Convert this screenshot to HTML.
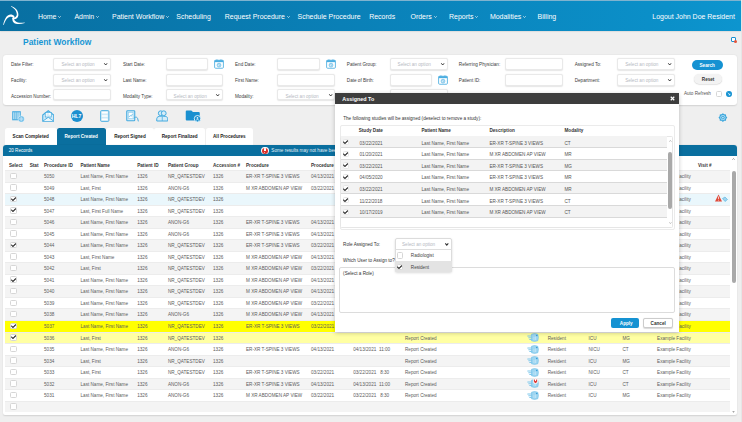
<!DOCTYPE html><html><head><meta charset="utf-8"><style>
*{box-sizing:border-box}
html,body{margin:0;padding:0;width:742px;height:422px;overflow:hidden;background:#efefef;font-family:"Liberation Sans",sans-serif}
.t{position:absolute;white-space:nowrap;line-height:1}
#root{position:absolute;left:0;top:0;width:742px;height:422px;overflow:hidden}
.abs{position:absolute}
.inp{position:absolute;background:#fff;border:0.6px solid #e9e9e9;border-radius:2px;box-shadow:0 0.3px 1.2px rgba(0,0,0,0.10)}
.chev{position:absolute;width:2.6px;height:2.6px;border-right:0.9px solid #333;border-bottom:0.9px solid #333;transform:rotate(45deg)}
.cb{position:absolute;width:6.4px;height:6.4px;border:0.6px solid #d6d6d6;border-radius:1.5px;background:#fff}
</style></head><body><div id="root">
<div class="abs" style="left:0;top:0;width:741px;height:31.3px;box-shadow:0 0.8px 1.5px rgba(0,0,0,0.18);background:linear-gradient(90deg,#086fa1 0%,#0a80b7 46%,#0b90c9 90%,#0d95cf 100%)"></div>
<div class="abs" style="left:0;top:0;width:741px;height:1px;background:#7fb3cf"></div>
<svg class="abs" style="left:0;top:0" width="30" height="31" viewBox="0 0 30 31">
<g fill="#fff">
<path d="M11.2 6.0 C15.5 7.5 18.8 11 18.4 15.2 C18.1 17.6 16.2 19.2 14.0 19.3 L13.6 18.0 C15.3 17.6 16.6 16.3 16.8 14.8 C17.1 11.5 14.6 8.4 11.0 6.5 Z"/>
<path d="M14.6 16.2 C11.8 13.6 8.2 14.2 6.2 17.0 C4.8 19.0 3.8 21.8 3.2 24.8 L3.8 24.9 C4.6 22.2 5.8 19.8 7.4 18.2 C9.4 16.2 12.0 16.2 13.6 17.8 Z"/>
<path d="M12.4 18.4 C12.0 21.4 14.0 23.6 17.2 23.9 C19.6 24.1 22.2 23.8 24.8 23.0 L24.6 22.5 C22.2 22.9 19.8 22.9 17.8 22.4 C15.4 21.8 14.0 20.4 13.8 18.6 Z"/>
<circle cx="13.6" cy="18.2" r="1.2"/>
</g></svg>
<div class="t" style="left:37.9px;top:13.29px;font-size:6.98px;color:#fff;">Home</div>
<svg class="abs" style="left:58.32px;top:15.60px;overflow:visible" width="3.0" height="1.8" viewBox="0 0 3.0 1.8"><path d="M0.3 0.3 L1.50 1.50 L2.70 0.3" stroke="#fff" stroke-width="0.7" fill="none"/></svg>
<div class="t" style="left:74.4px;top:13.29px;font-size:6.98px;color:#fff;">Admin</div>
<svg class="abs" style="left:95.98px;top:15.60px;overflow:visible" width="3.0" height="1.8" viewBox="0 0 3.0 1.8"><path d="M0.3 0.3 L1.50 1.50 L2.70 0.3" stroke="#fff" stroke-width="0.7" fill="none"/></svg>
<div class="t" style="left:112.1px;top:13.29px;font-size:6.98px;color:#fff;">Patient Workflow</div>
<svg class="abs" style="left:166.14px;top:15.60px;overflow:visible" width="3.0" height="1.8" viewBox="0 0 3.0 1.8"><path d="M0.3 0.3 L1.50 1.50 L2.70 0.3" stroke="#fff" stroke-width="0.7" fill="none"/></svg>
<div class="t" style="left:176.3px;top:13.29px;font-size:6.98px;color:#fff;">Scheduling</div>
<div class="t" style="left:224.8px;top:13.29px;font-size:6.98px;color:#fff;">Request Procedure</div>
<svg class="abs" style="left:286.74px;top:15.60px;overflow:visible" width="3.0" height="1.8" viewBox="0 0 3.0 1.8"><path d="M0.3 0.3 L1.50 1.50 L2.70 0.3" stroke="#fff" stroke-width="0.7" fill="none"/></svg>
<div class="t" style="left:297.5px;top:13.29px;font-size:6.98px;color:#fff;">Schedule Procedure</div>
<div class="t" style="left:369.2px;top:13.29px;font-size:6.98px;color:#fff;">Records</div>
<div class="t" style="left:410.5px;top:13.29px;font-size:6.98px;color:#fff;">Orders</div>
<svg class="abs" style="left:433.63px;top:15.60px;overflow:visible" width="3.0" height="1.8" viewBox="0 0 3.0 1.8"><path d="M0.3 0.3 L1.50 1.50 L2.70 0.3" stroke="#fff" stroke-width="0.7" fill="none"/></svg>
<div class="t" style="left:449px;top:13.29px;font-size:6.98px;color:#fff;">Reports</div>
<svg class="abs" style="left:475.24px;top:15.60px;overflow:visible" width="3.0" height="1.8" viewBox="0 0 3.0 1.8"><path d="M0.3 0.3 L1.50 1.50 L2.70 0.3" stroke="#fff" stroke-width="0.7" fill="none"/></svg>
<div class="t" style="left:489.9px;top:13.29px;font-size:6.98px;color:#fff;">Modalities</div>
<svg class="abs" style="left:523.12px;top:15.60px;overflow:visible" width="3.0" height="1.8" viewBox="0 0 3.0 1.8"><path d="M0.3 0.3 L1.50 1.50 L2.70 0.3" stroke="#fff" stroke-width="0.7" fill="none"/></svg>
<div class="t" style="left:537.6px;top:13.29px;font-size:6.98px;color:#fff;">Billing</div>
<div class="t" style="left:652.3px;top:13.29px;font-size:6.98px;color:#fff;">Logout John Doe Resident</div>
<div class="t" style="left:23px;top:38.35px;font-size:8.45px;color:#1896d4;font-weight:bold;">Patient Workflow</div>
<div class="abs" style="left:731px;top:37px;width:5px;height:5px;border:1px solid #1a8fd0;border-radius:1px;background:#fff"></div><div class="abs" style="left:733.5px;top:39.5px;width:3px;height:3px;border-radius:50%;background:#e5533a"></div>
<div class="abs" style="left:3px;top:54.5px;width:733.6px;height:50.1px;background:#fff;border-radius:3px;box-shadow:0 0.5px 1.5px rgba(0,0,0,0.12)"></div>
<div class="t" style="left:11px;top:62.97px;font-size:4.64px;color:#3a3a3a;">Date Filter:</div>
<div class="inp" style="left:53.4px;top:58.4px;width:57.9px;height:11.8px"></div>
<div class="t" style="left:61.506px;top:62.97px;font-size:4.64px;color:#b5b9c2;">Select an option</div>
<svg class="abs" style="left:104.30px;top:63.30px;overflow:visible" width="3.4" height="2.3" viewBox="0 0 3.4 2.3"><path d="M0.3 0.3 L1.70 2.00 L3.10 0.3" stroke="#333" stroke-width="1.0" fill="none"/></svg>
<div class="t" style="left:11px;top:79.17px;font-size:4.64px;color:#3a3a3a;">Facility:</div>
<div class="inp" style="left:53.4px;top:74.0px;width:57.9px;height:11.5px"></div>
<div class="t" style="left:61.506px;top:79.17px;font-size:4.64px;color:#b5b9c2;">Select an option</div>
<svg class="abs" style="left:104.30px;top:78.75px;overflow:visible" width="3.4" height="2.3" viewBox="0 0 3.4 2.3"><path d="M0.3 0.3 L1.70 2.00 L3.10 0.3" stroke="#333" stroke-width="1.0" fill="none"/></svg>
<div class="t" style="left:11px;top:94.57px;font-size:4.64px;color:#3a3a3a;">Accession Number:</div>
<div class="inp" style="left:53.4px;top:89.3px;width:57.9px;height:11.2px"></div>
<div class="t" style="left:122.9px;top:62.97px;font-size:4.64px;color:#3a3a3a;">Start Date:</div>
<div class="inp" style="left:165.5px;top:58.4px;width:42.1px;height:11.8px"></div>
<svg class="abs" style="left:214px;top:59.199999999999996px" width="10" height="10" viewBox="0 0 20 20"><rect x="1.2" y="2.5" width="17.6" height="16" rx="2" fill="#fff" stroke="#4aade0" stroke-width="1.7"/><rect x="1.2" y="2.5" width="17.6" height="3.8" fill="#4aade0"/><circle cx="10" cy="12.2" r="3.8" fill="#d6edf9" stroke="#4aade0" stroke-width="1.3"/><path d="M10 10 V12.4 L11.6 13.4" stroke="#4aade0" stroke-width="0.9" fill="none"/><rect x="5" y="0.8" width="1.8" height="3" fill="#4aade0"/><rect x="13" y="0.8" width="1.8" height="3" fill="#4aade0"/></svg>
<div class="t" style="left:122.9px;top:79.17px;font-size:4.64px;color:#3a3a3a;">Last Name:</div>
<div class="inp" style="left:165.5px;top:74.0px;width:57.8px;height:11.5px"></div>
<div class="t" style="left:122.9px;top:94.57px;font-size:4.64px;color:#3a3a3a;">Modality Type:</div>
<div class="inp" style="left:165.5px;top:89.3px;width:57.8px;height:11.2px"></div>
<div class="t" style="left:173.592px;top:94.57px;font-size:4.64px;color:#b5b9c2;">Select an option</div>
<svg class="abs" style="left:216.30px;top:93.90px;overflow:visible" width="3.4" height="2.3" viewBox="0 0 3.4 2.3"><path d="M0.3 0.3 L1.70 2.00 L3.10 0.3" stroke="#333" stroke-width="1.0" fill="none"/></svg>
<div class="t" style="left:235px;top:62.97px;font-size:4.64px;color:#3a3a3a;">End Date:</div>
<div class="inp" style="left:277.3px;top:58.4px;width:42.4px;height:11.8px"></div>
<svg class="abs" style="left:326px;top:59.199999999999996px" width="10" height="10" viewBox="0 0 20 20"><rect x="1.2" y="2.5" width="17.6" height="16" rx="2" fill="#fff" stroke="#4aade0" stroke-width="1.7"/><rect x="1.2" y="2.5" width="17.6" height="3.8" fill="#4aade0"/><circle cx="10" cy="12.2" r="3.8" fill="#d6edf9" stroke="#4aade0" stroke-width="1.3"/><path d="M10 10 V12.4 L11.6 13.4" stroke="#4aade0" stroke-width="0.9" fill="none"/><rect x="5" y="0.8" width="1.8" height="3" fill="#4aade0"/><rect x="13" y="0.8" width="1.8" height="3" fill="#4aade0"/></svg>
<div class="t" style="left:235px;top:79.17px;font-size:4.64px;color:#3a3a3a;">First Name:</div>
<div class="inp" style="left:277.3px;top:74.0px;width:58.2px;height:11.5px"></div>
<div class="t" style="left:235px;top:94.57px;font-size:4.64px;color:#3a3a3a;">Modality:</div>
<div class="inp" style="left:277.3px;top:89.3px;width:58.2px;height:11.2px"></div>
<div class="t" style="left:285.44800000000004px;top:94.57px;font-size:4.64px;color:#b5b9c2;">Select an option</div>
<svg class="abs" style="left:328.50px;top:93.90px;overflow:visible" width="3.4" height="2.3" viewBox="0 0 3.4 2.3"><path d="M0.3 0.3 L1.70 2.00 L3.10 0.3" stroke="#333" stroke-width="1.0" fill="none"/></svg>
<div class="t" style="left:346.8px;top:62.97px;font-size:4.64px;color:#3a3a3a;">Patient Group:</div>
<div class="inp" style="left:389.5px;top:58.4px;width:58.0px;height:11.8px"></div>
<div class="t" style="left:397.62px;top:62.97px;font-size:4.64px;color:#b5b9c2;">Select an option</div>
<svg class="abs" style="left:440.50px;top:63.30px;overflow:visible" width="3.4" height="2.3" viewBox="0 0 3.4 2.3"><path d="M0.3 0.3 L1.70 2.00 L3.10 0.3" stroke="#333" stroke-width="1.0" fill="none"/></svg>
<div class="t" style="left:346.8px;top:79.17px;font-size:4.64px;color:#3a3a3a;">Date of Birth:</div>
<div class="inp" style="left:389.5px;top:74.0px;width:42.1px;height:11.5px"></div>
<svg class="abs" style="left:438px;top:74.8px" width="10" height="10" viewBox="0 0 20 20"><rect x="1.2" y="2.5" width="17.6" height="16" rx="2" fill="#fff" stroke="#4aade0" stroke-width="1.7"/><rect x="1.2" y="2.5" width="17.6" height="3.8" fill="#4aade0"/><circle cx="10" cy="12.2" r="3.8" fill="#d6edf9" stroke="#4aade0" stroke-width="1.3"/><path d="M10 10 V12.4 L11.6 13.4" stroke="#4aade0" stroke-width="0.9" fill="none"/><rect x="5" y="0.8" width="1.8" height="3" fill="#4aade0"/><rect x="13" y="0.8" width="1.8" height="3" fill="#4aade0"/></svg>
<div class="inp" style="left:389.5px;top:89.3px;width:58.0px;height:11.2px"></div>
<div class="t" style="left:458.8px;top:62.97px;font-size:4.64px;color:#3a3a3a;">Referring Physician:</div>
<div class="inp" style="left:505.4px;top:58.4px;width:57.2px;height:11.8px"></div>
<div class="t" style="left:458.8px;top:79.17px;font-size:4.64px;color:#3a3a3a;">Patient ID:</div>
<div class="inp" style="left:505.4px;top:74.0px;width:57.2px;height:11.5px"></div>
<div class="t" style="left:574.7px;top:62.97px;font-size:4.64px;color:#3a3a3a;">Assigned To:</div>
<div class="inp" style="left:617.1px;top:58.4px;width:57.7px;height:11.8px"></div>
<div class="t" style="left:625.178px;top:62.97px;font-size:4.64px;color:#b5b9c2;">Select an option</div>
<svg class="abs" style="left:667.80px;top:63.30px;overflow:visible" width="3.4" height="2.3" viewBox="0 0 3.4 2.3"><path d="M0.3 0.3 L1.70 2.00 L3.10 0.3" stroke="#333" stroke-width="1.0" fill="none"/></svg>
<div class="t" style="left:574.7px;top:79.17px;font-size:4.64px;color:#3a3a3a;">Department:</div>
<div class="inp" style="left:617.1px;top:74.0px;width:57.7px;height:11.5px"></div>
<div class="t" style="left:625.178px;top:79.17px;font-size:4.64px;color:#b5b9c2;">Select an option</div>
<svg class="abs" style="left:667.80px;top:78.75px;overflow:visible" width="3.4" height="2.3" viewBox="0 0 3.4 2.3"><path d="M0.3 0.3 L1.70 2.00 L3.10 0.3" stroke="#333" stroke-width="1.0" fill="none"/></svg>
<div class="abs" style="left:692.4px;top:60.3px;width:30.7px;height:9.8px;border-radius:5px;background:#1592d2"></div>
<div class="t" style="left:699.5px;top:63.87px;font-size:4.64px;color:#fff;font-weight:bold;">Search</div>
<div class="abs" style="left:693.7px;top:74px;width:28.2px;height:10.3px;border-radius:5px;background:#f3f3f3;box-shadow:0 0.5px 1.2px rgba(0,0,0,0.2)"></div>
<div class="t" style="left:701.8px;top:77.77px;font-size:4.64px;color:#333;font-weight:bold;">Reset</div>
<div class="t" style="left:683.9px;top:92.27px;font-size:4.64px;color:#555;">Auto Refresh</div>
<div class="cb" style="left:715.7px;top:90.6px;width:6px;height:6px"></div>
<div class="abs" style="left:726px;top:91px;width:5.8px;height:5.8px;border-radius:50%;background:#1592d2"></div><svg class="abs" style="left:726px;top:91px" width="5.8" height="5.8" viewBox="0 0 10 10"><path d="M3.2 3 L6.8 6.8 M6.8 6.8 V4.6 M6.8 6.8 H4.6" stroke="#fff" stroke-width="1.1" fill="none"/></svg>
<svg class="abs" style="left:0;top:0" width="742" height="422"><polygon points="727.30,117.60 726.13,118.94 726.01,120.71 724.24,120.83 722.90,122.00 721.56,120.83 719.79,120.71 719.67,118.94 718.50,117.60 719.67,116.26 719.79,114.49 721.56,114.37 722.90,113.20 724.24,114.37 726.01,114.49 726.13,116.26" fill="#3aa6dc"/><circle cx="722.9" cy="117.6" r="2.2" fill="none" stroke="#c5e6f6" stroke-width="0.8"/><circle cx="722.9" cy="117.6" r="0.9" fill="#c5e6f6"/></svg>
<div class="abs" style="left:740.5px;top:31px;width:1.5px;height:391px;background:#e6e6e6"></div>
<svg class="abs" style="left:12.3px;top:110.5px" width="13" height="12" viewBox="0 0 26 24"><rect x="1.5" y="1.5" width="15" height="16" fill="#d3ebf8" stroke="#45abe0" stroke-width="2.2"/><path d="M5.5 2v15M8.5 2v15M12 2v15" stroke="#45abe0" stroke-width="1.6"/><circle cx="18.5" cy="16" r="6.2" fill="#8fcdee" stroke="#e9f6fc" stroke-width="1.3"/><circle cx="18.5" cy="16" r="5" fill="none" stroke="#45abe0" stroke-width="1"/><path d="M13.5 16 H23.5 M18.5 11 V21" stroke="#e9f6fc" stroke-width="0.8"/></svg>
<svg class="abs" style="left:41.8px;top:110px" width="12.5" height="12" viewBox="0 0 25 24"><path d="M1.5 10 L12.5 1.5 L23.5 10 V22.5 H1.5 Z" fill="#d3ebf8" stroke="#45abe0" stroke-width="2.2"/><rect x="6.5" y="5" width="12" height="9" fill="#fff" stroke="#45abe0" stroke-width="1.5"/><path d="M9 8 H14 M9 10.5 H16" stroke="#8ccbec" stroke-width="1"/><path d="M2 22 L12.5 14.5 L23 22" fill="#eaf6fc" stroke="#45abe0" stroke-width="1.8"/></svg>
<div class="abs" style="left:70.9px;top:109.7px;width:12.2px;height:12.2px;border-radius:50%;background:#1a8fd0"></div>
<div class="t" style="left:71.7px;top:114.48px;font-size:5.1px;color:#fff;font-weight:bold;">HL7</div>
<svg class="abs" style="left:100px;top:109.8px" width="9.5" height="12" viewBox="0 0 19 24"><rect x="1.2" y="1.2" width="16.6" height="21.6" rx="2" fill="#cfe9f7" stroke="#45abe0" stroke-width="1.8"/><rect x="3.5" y="3.6" width="12" height="3.4" rx="0.8" fill="#fff"/><rect x="3.5" y="10.3" width="12" height="3.4" rx="0.8" fill="#fff"/><rect x="3.5" y="17" width="12" height="3.4" rx="0.8" fill="#fff"/></svg>
<svg class="abs" style="left:126px;top:109.5px" width="13" height="12" viewBox="0 0 26 24"><rect x="1.5" y="1.5" width="16" height="20" rx="1.5" fill="#d3ebf8" stroke="#45abe0" stroke-width="2.2"/><rect x="5" y="5" width="9" height="12" fill="#fff" stroke="#8ccbec" stroke-width="1.2"/><path d="M6 14 L8.5 11 L10.5 12.5 L13 8" stroke="#45abe0" stroke-width="1.3" fill="none"/><path d="M16 16 C19 13 23 14 23.5 18 L24.5 22" stroke="#45abe0" stroke-width="2" fill="none" stroke-linecap="round"/></svg>
<svg class="abs" style="left:155.5px;top:110px" width="12.5" height="11.5" viewBox="0 0 25 23"><path d="M1.5 22 V17.5 C1.5 13.5 5.5 12.5 9.5 12.5 C11 12.5 12 12.8 12.5 13.3 C13 12.8 14 12.5 15.5 12.5 C19.5 12.5 23.5 13.5 23.5 17.5 V22 Z" fill="#d5ecf8" stroke="#45abe0" stroke-width="2"/><circle cx="9.5" cy="6.5" r="4.8" fill="#d5ecf8" stroke="#45abe0" stroke-width="2"/><circle cx="15.5" cy="6.5" r="4.8" fill="#d5ecf8" stroke="#45abe0" stroke-width="2"/><path d="M12.5 13.5 V22" stroke="#45abe0" stroke-width="1.5"/></svg>
<svg class="abs" style="left:184.5px;top:109.5px" width="17" height="13" viewBox="0 0 34 26"><path d="M1.5 3 Q1.5 1 3.5 1 H12 Q13.5 1 14.5 2.5 L15.5 4 H27.5 Q29.5 4 29.5 6 V19 Q29.5 21 27.5 21 H3.5 Q1.5 21 1.5 19 Z" fill="#1a90d0"/><circle cx="25" cy="17.5" r="6.5" fill="#1a90d0" stroke="#e8f5fc" stroke-width="1.8"/><circle cx="25" cy="15.8" r="1.7" fill="#e8f5fc"/><path d="M21.8 20.5 Q25 17.6 28.2 20.5" stroke="#e8f5fc" stroke-width="1.5" fill="none"/></svg>
<div class="abs" style="left:4.7px;top:128px;width:52.2px;height:17px;background:#fff;border-radius:2.5px 2.5px 0 0"></div>
<div class="t" style="left:12.623887500000002px;top:135.07px;font-size:4.64px;color:#222;font-weight:bold;">Scan Completed</div>
<div class="abs" style="left:56.9px;top:128px;width:48.8px;height:17px;background:#0a6f9f;border-radius:2.5px 2.5px 0 0"></div>
<div class="t" style="left:64.5419875px;top:135.07px;font-size:4.64px;color:#fff;font-weight:bold;">Report Created</div>
<div class="abs" style="left:106.4px;top:128px;width:47.2px;height:17px;background:#fff;border-radius:2.5px 2.5px 0 0"></div>
<div class="t" style="left:114.14715px;top:135.07px;font-size:4.64px;color:#222;font-weight:bold;">Report Signed</div>
<div class="abs" style="left:154.3px;top:128px;width:50.9px;height:17px;background:#fff;border-radius:2.5px 2.5px 0 0"></div>
<div class="t" style="left:161.705475px;top:135.07px;font-size:4.64px;color:#222;font-weight:bold;">Report Finalized</div>
<div class="abs" style="left:206px;top:128px;width:46.8px;height:17px;background:#fff;border-radius:2.5px 2.5px 0 0"></div>
<div class="t" style="left:213.025875px;top:135.07px;font-size:4.64px;color:#222;font-weight:bold;">All Procedures</div>
<div class="abs" style="left:3px;top:144.6px;width:734px;height:270.8px;background:#fff;border-radius:3px 3px 2px 2px;box-shadow:0 0.5px 1.5px rgba(0,0,0,0.12)"></div>
<div class="abs" style="left:3px;top:144.6px;width:733.5px;height:11.2px;background:#0a6f9f;border-radius:3px 3px 0 0"></div>
<div class="t" style="left:8.7px;top:149.17px;font-size:4.64px;color:#fff;">20 Records</div>
<div class="abs" style="left:261px;top:146.6px;width:7.8px;height:7.8px;border-radius:50%;background:#fff"></div><div class="abs" style="left:261.9px;top:147.5px;width:6px;height:6px;border-radius:50%;background:#d9312b"></div><div class="abs" style="left:264.25px;top:148.3px;width:1.3px;height:3px;border-radius:0.6px;background:#fff"></div><div class="abs" style="left:264.3px;top:151.6px;width:1.2px;height:1.1px;border-radius:50%;background:#fff"></div>
<div class="t" style="left:271.3px;top:149.37px;font-size:4.64px;color:#e6f1f7;">Some results may not have been loaded. Please refine your search.</div>
<div class="t" style="left:8.9px;top:163.77px;font-size:4.64px;color:#333;font-weight:bold;">Select</div>
<div class="t" style="left:29.7px;top:163.77px;font-size:4.64px;color:#333;font-weight:bold;">Stat</div>
<div class="t" style="left:44px;top:163.77px;font-size:4.64px;color:#333;font-weight:bold;">Procedure ID</div>
<div class="t" style="left:80.5px;top:163.77px;font-size:4.64px;color:#333;font-weight:bold;">Patient Name</div>
<div class="t" style="left:137.2px;top:163.77px;font-size:4.64px;color:#333;font-weight:bold;">Patient ID</div>
<div class="t" style="left:167.9px;top:163.77px;font-size:4.64px;color:#333;font-weight:bold;">Patient Group</div>
<div class="t" style="left:213px;top:163.77px;font-size:4.64px;color:#333;font-weight:bold;">Accession #</div>
<div class="t" style="left:246px;top:163.77px;font-size:4.64px;color:#333;font-weight:bold;">Procedure</div>
<div class="t" style="left:311px;top:163.77px;font-size:4.64px;color:#333;font-weight:bold;">Procedure Date</div>
<div class="t" style="left:353.2px;top:163.77px;font-size:4.64px;color:#333;font-weight:bold;">Scheduled Date</div>
<div class="t" style="left:405px;top:163.77px;font-size:4.64px;color:#333;font-weight:bold;">Status</div>
<div class="t" style="left:527px;top:163.77px;font-size:4.64px;color:#333;font-weight:bold;">Report</div>
<div class="t" style="left:547.7px;top:163.77px;font-size:4.64px;color:#333;font-weight:bold;">Role</div>
<div class="t" style="left:588.5px;top:163.77px;font-size:4.64px;color:#333;font-weight:bold;">Department</div>
<div class="t" style="left:622.5px;top:163.77px;font-size:4.64px;color:#333;font-weight:bold;">Modality</div>
<div class="t" style="left:657.1px;top:163.77px;font-size:4.64px;color:#333;font-weight:bold;">Facility</div>
<div class="t" style="left:698px;top:163.77px;font-size:4.64px;color:#333;font-weight:bold;">Visit #</div>
<div class="abs" style="left:5.2px;top:170.00px;width:725px;height:11.540px;background:#f4f4f4;border-top:0.5px solid #ececec"></div>
<div class="cb" style="left:10.4px;top:172.60px"></div>
<div class="t" style="left:44px;top:174.97px;font-size:4.64px;color:#5c5c5c;">5050</div>
<div class="t" style="left:80.5px;top:174.97px;font-size:4.64px;color:#5c5c5c;">Last Name, First Name</div>
<div class="t" style="left:137.2px;top:174.97px;font-size:4.64px;color:#5c5c5c;">1326</div>
<div class="t" style="left:167.9px;top:174.97px;font-size:4.64px;color:#5c5c5c;">NR_QATESTDEV</div>
<div class="t" style="left:213px;top:174.97px;font-size:4.64px;color:#5c5c5c;">1326</div>
<div class="t" style="left:246px;top:174.97px;font-size:4.64px;color:#5c5c5c;">ER-XR T-SPINE 3 VIEWS</div>
<div class="t" style="left:311px;top:174.97px;font-size:4.64px;color:#5c5c5c;">04/13/2021</div>
<div class="t" style="left:405px;top:174.97px;font-size:4.64px;color:#5c5c5c;">Report Created</div>
<svg class="abs" style="left:526.5px;top:171.70px" width="12" height="9" viewBox="0 0 24 18"><path d="M9 2.5 Q15 -0.5 21.5 2.5 Q24 9 21.5 15.5 Q15 18 9 15.5 Z" fill="#9fd6f1" stroke="#6cc0e8" stroke-width="1.2"/><path d="M1.5 6 H10 M3.5 9.5 H10 M5.5 13 H10" stroke="#7fc8ec" stroke-width="2.2" stroke-linecap="round"/><circle cx="19.5" cy="5" r="1.6" fill="#3a9ed8"/><path d="M14 8 V14 M17 7 V14" stroke="#d6eefa" stroke-width="1"/></svg>
<div class="t" style="left:547.7px;top:174.97px;font-size:4.64px;color:#5c5c5c;">Resident</div>
<div class="t" style="left:588.5px;top:174.97px;font-size:4.64px;color:#5c5c5c;">ICU</div>
<div class="t" style="left:622.5px;top:174.97px;font-size:4.64px;color:#5c5c5c;">MG</div>
<div class="t" style="left:657.1px;top:174.97px;font-size:4.64px;color:#5c5c5c;">Example Facility</div>
<div class="abs" style="left:5.2px;top:181.54px;width:725px;height:11.540px;background:#fff;border-top:0.5px solid #ececec"></div>
<div class="cb" style="left:10.4px;top:184.14px"></div>
<div class="t" style="left:44px;top:186.51px;font-size:4.64px;color:#5c5c5c;">5049</div>
<div class="t" style="left:80.5px;top:186.51px;font-size:4.64px;color:#5c5c5c;">Last, First</div>
<div class="t" style="left:137.2px;top:186.51px;font-size:4.64px;color:#5c5c5c;">1326</div>
<div class="t" style="left:167.9px;top:186.51px;font-size:4.64px;color:#5c5c5c;">ANON-G6</div>
<div class="t" style="left:213px;top:186.51px;font-size:4.64px;color:#5c5c5c;">1326</div>
<div class="t" style="left:246px;top:186.51px;font-size:4.64px;color:#5c5c5c;">M XR ABDOMEN AP VIEW</div>
<div class="t" style="left:311px;top:186.51px;font-size:4.64px;color:#5c5c5c;">03/22/2021</div>
<div class="t" style="left:405px;top:186.51px;font-size:4.64px;color:#5c5c5c;">Report Created</div>
<svg class="abs" style="left:526.5px;top:183.24px" width="12" height="9" viewBox="0 0 24 18"><path d="M9 2.5 Q15 -0.5 21.5 2.5 Q24 9 21.5 15.5 Q15 18 9 15.5 Z" fill="#9fd6f1" stroke="#6cc0e8" stroke-width="1.2"/><path d="M1.5 6 H10 M3.5 9.5 H10 M5.5 13 H10" stroke="#7fc8ec" stroke-width="2.2" stroke-linecap="round"/><circle cx="19.5" cy="5" r="1.6" fill="#3a9ed8"/><path d="M14 8 V14 M17 7 V14" stroke="#d6eefa" stroke-width="1"/></svg>
<div class="t" style="left:547.7px;top:186.51px;font-size:4.64px;color:#5c5c5c;">Resident</div>
<div class="t" style="left:588.5px;top:186.51px;font-size:4.64px;color:#5c5c5c;">ICU</div>
<div class="t" style="left:622.5px;top:186.51px;font-size:4.64px;color:#5c5c5c;">MG</div>
<div class="t" style="left:657.1px;top:186.51px;font-size:4.64px;color:#5c5c5c;">Example Facility</div>
<div class="abs" style="left:5.2px;top:193.08px;width:725px;height:11.540px;background:#eaf7fc;border-top:0.5px solid #ececec"></div>
<div class="cb" style="left:10.4px;top:195.68px"></div>
<div class="abs" style="left:10.4px;top:195.68px;width:6.3px;height:6.3px"><svg width="5.2" height="4.2" viewBox="0 40 512 420" style="position:absolute;left:0.5px;top:1.2px" preserveAspectRatio="none"><path fill="#1e1e1e" d="M173.898 439.404l-166.4-166.4c-9.997-9.997-9.997-26.206 0-36.204l36.203-36.204c9.997-9.998 26.207-9.998 36.204 0L192 312.69 432.095 72.596c9.997-9.997 26.207-9.997 36.204 0l36.203 36.204c9.997 9.997 9.997 26.206 0 36.204l-294.4 294.401c-9.998 9.997-26.207 9.997-36.204-.001z"/></svg></div>
<div class="t" style="left:44px;top:198.05px;font-size:4.64px;color:#5c5c5c;">5048</div>
<div class="t" style="left:80.5px;top:198.05px;font-size:4.64px;color:#5c5c5c;">Last Name, First Name</div>
<div class="t" style="left:137.2px;top:198.05px;font-size:4.64px;color:#5c5c5c;">1326</div>
<div class="t" style="left:167.9px;top:198.05px;font-size:4.64px;color:#5c5c5c;">NR_QATESTDEV</div>
<div class="t" style="left:213px;top:198.05px;font-size:4.64px;color:#5c5c5c;">1326</div>
<div class="t" style="left:405px;top:198.05px;font-size:4.64px;color:#5c5c5c;">Report Created</div>
<svg class="abs" style="left:526.5px;top:194.78px" width="12" height="9" viewBox="0 0 24 18"><path d="M9 2.5 Q15 -0.5 21.5 2.5 Q24 9 21.5 15.5 Q15 18 9 15.5 Z" fill="#9fd6f1" stroke="#6cc0e8" stroke-width="1.2"/><path d="M1.5 6 H10 M3.5 9.5 H10 M5.5 13 H10" stroke="#7fc8ec" stroke-width="2.2" stroke-linecap="round"/><circle cx="19.5" cy="5" r="1.6" fill="#3a9ed8"/><path d="M14 8 V14 M17 7 V14" stroke="#d6eefa" stroke-width="1"/></svg>
<div class="t" style="left:547.7px;top:198.05px;font-size:4.64px;color:#5c5c5c;">Resident</div>
<div class="t" style="left:588.5px;top:198.05px;font-size:4.64px;color:#5c5c5c;">ICU</div>
<div class="t" style="left:622.5px;top:198.05px;font-size:4.64px;color:#5c5c5c;">MG</div>
<div class="t" style="left:657.1px;top:198.05px;font-size:4.64px;color:#5c5c5c;">Example Facility</div>
<div class="abs" style="left:5.2px;top:204.62px;width:725px;height:11.540px;background:#fff;border-top:0.5px solid #ececec"></div>
<div class="cb" style="left:10.4px;top:207.22px"></div>
<div class="abs" style="left:10.4px;top:207.22px;width:6.3px;height:6.3px"><svg width="5.2" height="4.2" viewBox="0 40 512 420" style="position:absolute;left:0.5px;top:1.2px" preserveAspectRatio="none"><path fill="#1e1e1e" d="M173.898 439.404l-166.4-166.4c-9.997-9.997-9.997-26.206 0-36.204l36.203-36.204c9.997-9.998 26.207-9.998 36.204 0L192 312.69 432.095 72.596c9.997-9.997 26.207-9.997 36.204 0l36.203 36.204c9.997 9.997 9.997 26.206 0 36.204l-294.4 294.401c-9.998 9.997-26.207 9.997-36.204-.001z"/></svg></div>
<div class="t" style="left:44px;top:209.59px;font-size:4.64px;color:#5c5c5c;">5047</div>
<div class="t" style="left:80.5px;top:209.59px;font-size:4.64px;color:#5c5c5c;">Last, First Full Name</div>
<div class="t" style="left:137.2px;top:209.59px;font-size:4.64px;color:#5c5c5c;">1326</div>
<div class="t" style="left:167.9px;top:209.59px;font-size:4.64px;color:#5c5c5c;">NR_QATESTDEV</div>
<div class="t" style="left:213px;top:209.59px;font-size:4.64px;color:#5c5c5c;">1326</div>
<div class="t" style="left:405px;top:209.59px;font-size:4.64px;color:#5c5c5c;">Report Created</div>
<svg class="abs" style="left:526.5px;top:206.32px" width="12" height="9" viewBox="0 0 24 18"><path d="M9 2.5 Q15 -0.5 21.5 2.5 Q24 9 21.5 15.5 Q15 18 9 15.5 Z" fill="#9fd6f1" stroke="#6cc0e8" stroke-width="1.2"/><path d="M1.5 6 H10 M3.5 9.5 H10 M5.5 13 H10" stroke="#7fc8ec" stroke-width="2.2" stroke-linecap="round"/><circle cx="19.5" cy="5" r="1.6" fill="#3a9ed8"/><path d="M14 8 V14 M17 7 V14" stroke="#d6eefa" stroke-width="1"/></svg>
<div class="t" style="left:547.7px;top:209.59px;font-size:4.64px;color:#5c5c5c;">Resident</div>
<div class="t" style="left:588.5px;top:209.59px;font-size:4.64px;color:#5c5c5c;">ICU</div>
<div class="t" style="left:622.5px;top:209.59px;font-size:4.64px;color:#5c5c5c;">MG</div>
<div class="t" style="left:657.1px;top:209.59px;font-size:4.64px;color:#5c5c5c;">Example Facility</div>
<div class="abs" style="left:5.2px;top:216.16px;width:725px;height:11.540px;background:#f4f4f4;border-top:0.5px solid #ececec"></div>
<div class="cb" style="left:10.4px;top:218.76px"></div>
<div class="t" style="left:44px;top:221.13px;font-size:4.64px;color:#5c5c5c;">5046</div>
<div class="t" style="left:80.5px;top:221.13px;font-size:4.64px;color:#5c5c5c;">Last Name, First Name</div>
<div class="t" style="left:137.2px;top:221.13px;font-size:4.64px;color:#5c5c5c;">1326</div>
<div class="t" style="left:167.9px;top:221.13px;font-size:4.64px;color:#5c5c5c;">ANON-G6</div>
<div class="t" style="left:213px;top:221.13px;font-size:4.64px;color:#5c5c5c;">1326</div>
<div class="t" style="left:246px;top:221.13px;font-size:4.64px;color:#5c5c5c;">ER-XR T-SPINE 3 VIEWS</div>
<div class="t" style="left:311px;top:221.13px;font-size:4.64px;color:#5c5c5c;">04/13/2021</div>
<div class="t" style="left:405px;top:221.13px;font-size:4.64px;color:#5c5c5c;">Report Created</div>
<svg class="abs" style="left:526.5px;top:217.86px" width="12" height="9" viewBox="0 0 24 18"><path d="M9 2.5 Q15 -0.5 21.5 2.5 Q24 9 21.5 15.5 Q15 18 9 15.5 Z" fill="#9fd6f1" stroke="#6cc0e8" stroke-width="1.2"/><path d="M1.5 6 H10 M3.5 9.5 H10 M5.5 13 H10" stroke="#7fc8ec" stroke-width="2.2" stroke-linecap="round"/><circle cx="19.5" cy="5" r="1.6" fill="#3a9ed8"/><path d="M14 8 V14 M17 7 V14" stroke="#d6eefa" stroke-width="1"/></svg>
<div class="t" style="left:547.7px;top:221.13px;font-size:4.64px;color:#5c5c5c;">Resident</div>
<div class="t" style="left:588.5px;top:221.13px;font-size:4.64px;color:#5c5c5c;">ICU</div>
<div class="t" style="left:622.5px;top:221.13px;font-size:4.64px;color:#5c5c5c;">MG</div>
<div class="t" style="left:657.1px;top:221.13px;font-size:4.64px;color:#5c5c5c;">Example Facility</div>
<div class="abs" style="left:5.2px;top:227.70px;width:725px;height:11.540px;background:#fff;border-top:0.5px solid #ececec"></div>
<div class="cb" style="left:10.4px;top:230.30px"></div>
<div class="t" style="left:44px;top:232.67px;font-size:4.64px;color:#5c5c5c;">5045</div>
<div class="t" style="left:80.5px;top:232.67px;font-size:4.64px;color:#5c5c5c;">Last Name, First Name</div>
<div class="t" style="left:137.2px;top:232.67px;font-size:4.64px;color:#5c5c5c;">1326</div>
<div class="t" style="left:167.9px;top:232.67px;font-size:4.64px;color:#5c5c5c;">ANON-G6</div>
<div class="t" style="left:213px;top:232.67px;font-size:4.64px;color:#5c5c5c;">1326</div>
<div class="t" style="left:246px;top:232.67px;font-size:4.64px;color:#5c5c5c;">ER-XR T-SPINE 3 VIEWS</div>
<div class="t" style="left:311px;top:232.67px;font-size:4.64px;color:#5c5c5c;">04/13/2021</div>
<div class="t" style="left:405px;top:232.67px;font-size:4.64px;color:#5c5c5c;">Report Created</div>
<svg class="abs" style="left:526.5px;top:229.40px" width="12" height="9" viewBox="0 0 24 18"><path d="M9 2.5 Q15 -0.5 21.5 2.5 Q24 9 21.5 15.5 Q15 18 9 15.5 Z" fill="#9fd6f1" stroke="#6cc0e8" stroke-width="1.2"/><path d="M1.5 6 H10 M3.5 9.5 H10 M5.5 13 H10" stroke="#7fc8ec" stroke-width="2.2" stroke-linecap="round"/><circle cx="19.5" cy="5" r="1.6" fill="#3a9ed8"/><path d="M14 8 V14 M17 7 V14" stroke="#d6eefa" stroke-width="1"/></svg>
<div class="t" style="left:547.7px;top:232.67px;font-size:4.64px;color:#5c5c5c;">Resident</div>
<div class="t" style="left:588.5px;top:232.67px;font-size:4.64px;color:#5c5c5c;">ICU</div>
<div class="t" style="left:622.5px;top:232.67px;font-size:4.64px;color:#5c5c5c;">MG</div>
<div class="t" style="left:657.1px;top:232.67px;font-size:4.64px;color:#5c5c5c;">Example Facility</div>
<div class="abs" style="left:5.2px;top:239.24px;width:725px;height:11.540px;background:#f4f4f4;border-top:0.5px solid #ececec"></div>
<div class="cb" style="left:10.4px;top:241.84px"></div>
<div class="abs" style="left:10.4px;top:241.84px;width:6.3px;height:6.3px"><svg width="5.2" height="4.2" viewBox="0 40 512 420" style="position:absolute;left:0.5px;top:1.2px" preserveAspectRatio="none"><path fill="#1e1e1e" d="M173.898 439.404l-166.4-166.4c-9.997-9.997-9.997-26.206 0-36.204l36.203-36.204c9.997-9.998 26.207-9.998 36.204 0L192 312.69 432.095 72.596c9.997-9.997 26.207-9.997 36.204 0l36.203 36.204c9.997 9.997 9.997 26.206 0 36.204l-294.4 294.401c-9.998 9.997-26.207 9.997-36.204-.001z"/></svg></div>
<div class="t" style="left:44px;top:244.21px;font-size:4.64px;color:#5c5c5c;">5044</div>
<div class="t" style="left:80.5px;top:244.21px;font-size:4.64px;color:#5c5c5c;">Last Name, First Name</div>
<div class="t" style="left:137.2px;top:244.21px;font-size:4.64px;color:#5c5c5c;">1326</div>
<div class="t" style="left:167.9px;top:244.21px;font-size:4.64px;color:#5c5c5c;">NR_QATESTDEV</div>
<div class="t" style="left:213px;top:244.21px;font-size:4.64px;color:#5c5c5c;">1326</div>
<div class="t" style="left:246px;top:244.21px;font-size:4.64px;color:#5c5c5c;">ER-XR T-SPINE 3 VIEWS</div>
<div class="t" style="left:311px;top:244.21px;font-size:4.64px;color:#5c5c5c;">03/22/2021</div>
<div class="t" style="left:405px;top:244.21px;font-size:4.64px;color:#5c5c5c;">Report Created</div>
<svg class="abs" style="left:526.5px;top:240.94px" width="12" height="9" viewBox="0 0 24 18"><path d="M9 2.5 Q15 -0.5 21.5 2.5 Q24 9 21.5 15.5 Q15 18 9 15.5 Z" fill="#9fd6f1" stroke="#6cc0e8" stroke-width="1.2"/><path d="M1.5 6 H10 M3.5 9.5 H10 M5.5 13 H10" stroke="#7fc8ec" stroke-width="2.2" stroke-linecap="round"/><circle cx="19.5" cy="5" r="1.6" fill="#3a9ed8"/><path d="M14 8 V14 M17 7 V14" stroke="#d6eefa" stroke-width="1"/></svg>
<div class="t" style="left:547.7px;top:244.21px;font-size:4.64px;color:#5c5c5c;">Resident</div>
<div class="t" style="left:588.5px;top:244.21px;font-size:4.64px;color:#5c5c5c;">ICU</div>
<div class="t" style="left:622.5px;top:244.21px;font-size:4.64px;color:#5c5c5c;">MG</div>
<div class="t" style="left:657.1px;top:244.21px;font-size:4.64px;color:#5c5c5c;">Example Facility</div>
<div class="abs" style="left:5.2px;top:250.78px;width:725px;height:11.540px;background:#fff;border-top:0.5px solid #ececec"></div>
<div class="cb" style="left:10.4px;top:253.38px"></div>
<div class="t" style="left:44px;top:255.75px;font-size:4.64px;color:#5c5c5c;">5043</div>
<div class="t" style="left:80.5px;top:255.75px;font-size:4.64px;color:#5c5c5c;">Last, First Name</div>
<div class="t" style="left:137.2px;top:255.75px;font-size:4.64px;color:#5c5c5c;">1326</div>
<div class="t" style="left:167.9px;top:255.75px;font-size:4.64px;color:#5c5c5c;">NR_QATESTDEV</div>
<div class="t" style="left:213px;top:255.75px;font-size:4.64px;color:#5c5c5c;">1326</div>
<div class="t" style="left:246px;top:255.75px;font-size:4.64px;color:#5c5c5c;">M XR ABDOMEN AP VIEW</div>
<div class="t" style="left:311px;top:255.75px;font-size:4.64px;color:#5c5c5c;">04/13/2021</div>
<div class="t" style="left:405px;top:255.75px;font-size:4.64px;color:#5c5c5c;">Report Created</div>
<svg class="abs" style="left:526.5px;top:252.48px" width="12" height="9" viewBox="0 0 24 18"><path d="M9 2.5 Q15 -0.5 21.5 2.5 Q24 9 21.5 15.5 Q15 18 9 15.5 Z" fill="#9fd6f1" stroke="#6cc0e8" stroke-width="1.2"/><path d="M1.5 6 H10 M3.5 9.5 H10 M5.5 13 H10" stroke="#7fc8ec" stroke-width="2.2" stroke-linecap="round"/><circle cx="19.5" cy="5" r="1.6" fill="#3a9ed8"/><path d="M14 8 V14 M17 7 V14" stroke="#d6eefa" stroke-width="1"/></svg>
<div class="t" style="left:547.7px;top:255.75px;font-size:4.64px;color:#5c5c5c;">Resident</div>
<div class="t" style="left:588.5px;top:255.75px;font-size:4.64px;color:#5c5c5c;">ICU</div>
<div class="t" style="left:622.5px;top:255.75px;font-size:4.64px;color:#5c5c5c;">MG</div>
<div class="t" style="left:657.1px;top:255.75px;font-size:4.64px;color:#5c5c5c;">Example Facility</div>
<div class="abs" style="left:5.2px;top:262.32px;width:725px;height:11.540px;background:#f4f4f4;border-top:0.5px solid #ececec"></div>
<div class="cb" style="left:10.4px;top:264.92px"></div>
<div class="t" style="left:44px;top:267.29px;font-size:4.64px;color:#5c5c5c;">5042</div>
<div class="t" style="left:80.5px;top:267.29px;font-size:4.64px;color:#5c5c5c;">Last, First</div>
<div class="t" style="left:137.2px;top:267.29px;font-size:4.64px;color:#5c5c5c;">1326</div>
<div class="t" style="left:167.9px;top:267.29px;font-size:4.64px;color:#5c5c5c;">NR_QATESTDEV</div>
<div class="t" style="left:213px;top:267.29px;font-size:4.64px;color:#5c5c5c;">1326</div>
<div class="t" style="left:246px;top:267.29px;font-size:4.64px;color:#5c5c5c;">M XR ABDOMEN AP VIEW</div>
<div class="t" style="left:311px;top:267.29px;font-size:4.64px;color:#5c5c5c;">03/22/2021</div>
<div class="t" style="left:405px;top:267.29px;font-size:4.64px;color:#5c5c5c;">Report Created</div>
<svg class="abs" style="left:526.5px;top:264.02px" width="12" height="9" viewBox="0 0 24 18"><path d="M9 2.5 Q15 -0.5 21.5 2.5 Q24 9 21.5 15.5 Q15 18 9 15.5 Z" fill="#9fd6f1" stroke="#6cc0e8" stroke-width="1.2"/><path d="M1.5 6 H10 M3.5 9.5 H10 M5.5 13 H10" stroke="#7fc8ec" stroke-width="2.2" stroke-linecap="round"/><circle cx="19.5" cy="5" r="1.6" fill="#3a9ed8"/><path d="M14 8 V14 M17 7 V14" stroke="#d6eefa" stroke-width="1"/></svg>
<div class="t" style="left:547.7px;top:267.29px;font-size:4.64px;color:#5c5c5c;">Resident</div>
<div class="t" style="left:588.5px;top:267.29px;font-size:4.64px;color:#5c5c5c;">ICU</div>
<div class="t" style="left:622.5px;top:267.29px;font-size:4.64px;color:#5c5c5c;">MG</div>
<div class="t" style="left:657.1px;top:267.29px;font-size:4.64px;color:#5c5c5c;">Example Facility</div>
<div class="abs" style="left:5.2px;top:273.86px;width:725px;height:11.540px;background:#fff;border-top:0.5px solid #ececec"></div>
<div class="cb" style="left:10.4px;top:276.46px"></div>
<div class="abs" style="left:10.4px;top:276.46px;width:6.3px;height:6.3px"><svg width="5.2" height="4.2" viewBox="0 40 512 420" style="position:absolute;left:0.5px;top:1.2px" preserveAspectRatio="none"><path fill="#1e1e1e" d="M173.898 439.404l-166.4-166.4c-9.997-9.997-9.997-26.206 0-36.204l36.203-36.204c9.997-9.998 26.207-9.998 36.204 0L192 312.69 432.095 72.596c9.997-9.997 26.207-9.997 36.204 0l36.203 36.204c9.997 9.997 9.997 26.206 0 36.204l-294.4 294.401c-9.998 9.997-26.207 9.997-36.204-.001z"/></svg></div>
<div class="t" style="left:44px;top:278.83px;font-size:4.64px;color:#5c5c5c;">5041</div>
<div class="t" style="left:80.5px;top:278.83px;font-size:4.64px;color:#5c5c5c;">Last Name, First Name</div>
<div class="t" style="left:137.2px;top:278.83px;font-size:4.64px;color:#5c5c5c;">1326</div>
<div class="t" style="left:167.9px;top:278.83px;font-size:4.64px;color:#5c5c5c;">NR_QATESTDEV</div>
<div class="t" style="left:213px;top:278.83px;font-size:4.64px;color:#5c5c5c;">1326</div>
<div class="t" style="left:246px;top:278.83px;font-size:4.64px;color:#5c5c5c;">M XR ABDOMEN AP VIEW</div>
<div class="t" style="left:311px;top:278.83px;font-size:4.64px;color:#5c5c5c;">04/13/2021</div>
<div class="t" style="left:405px;top:278.83px;font-size:4.64px;color:#5c5c5c;">Report Created</div>
<svg class="abs" style="left:526.5px;top:275.56px" width="12" height="9" viewBox="0 0 24 18"><path d="M9 2.5 Q15 -0.5 21.5 2.5 Q24 9 21.5 15.5 Q15 18 9 15.5 Z" fill="#9fd6f1" stroke="#6cc0e8" stroke-width="1.2"/><path d="M1.5 6 H10 M3.5 9.5 H10 M5.5 13 H10" stroke="#7fc8ec" stroke-width="2.2" stroke-linecap="round"/><circle cx="19.5" cy="5" r="1.6" fill="#3a9ed8"/><path d="M14 8 V14 M17 7 V14" stroke="#d6eefa" stroke-width="1"/></svg>
<div class="t" style="left:547.7px;top:278.83px;font-size:4.64px;color:#5c5c5c;">Resident</div>
<div class="t" style="left:588.5px;top:278.83px;font-size:4.64px;color:#5c5c5c;">ICU</div>
<div class="t" style="left:622.5px;top:278.83px;font-size:4.64px;color:#5c5c5c;">MG</div>
<div class="t" style="left:657.1px;top:278.83px;font-size:4.64px;color:#5c5c5c;">Example Facility</div>
<div class="abs" style="left:5.2px;top:285.40px;width:725px;height:11.540px;background:#f4f4f4;border-top:0.5px solid #ececec"></div>
<div class="cb" style="left:10.4px;top:288.00px"></div>
<div class="t" style="left:44px;top:290.37px;font-size:4.64px;color:#5c5c5c;">5040</div>
<div class="t" style="left:80.5px;top:290.37px;font-size:4.64px;color:#5c5c5c;">Last Name, First Name</div>
<div class="t" style="left:137.2px;top:290.37px;font-size:4.64px;color:#5c5c5c;">1326</div>
<div class="t" style="left:167.9px;top:290.37px;font-size:4.64px;color:#5c5c5c;">NR_QATESTDEV</div>
<div class="t" style="left:213px;top:290.37px;font-size:4.64px;color:#5c5c5c;">1326</div>
<div class="t" style="left:246px;top:290.37px;font-size:4.64px;color:#5c5c5c;">M XR ABDOMEN AP VIEW</div>
<div class="t" style="left:311px;top:290.37px;font-size:4.64px;color:#5c5c5c;">04/13/2021</div>
<div class="t" style="left:405px;top:290.37px;font-size:4.64px;color:#5c5c5c;">Report Created</div>
<svg class="abs" style="left:526.5px;top:287.10px" width="12" height="9" viewBox="0 0 24 18"><path d="M9 2.5 Q15 -0.5 21.5 2.5 Q24 9 21.5 15.5 Q15 18 9 15.5 Z" fill="#9fd6f1" stroke="#6cc0e8" stroke-width="1.2"/><path d="M1.5 6 H10 M3.5 9.5 H10 M5.5 13 H10" stroke="#7fc8ec" stroke-width="2.2" stroke-linecap="round"/><circle cx="19.5" cy="5" r="1.6" fill="#3a9ed8"/><path d="M14 8 V14 M17 7 V14" stroke="#d6eefa" stroke-width="1"/></svg>
<div class="t" style="left:547.7px;top:290.37px;font-size:4.64px;color:#5c5c5c;">Resident</div>
<div class="t" style="left:588.5px;top:290.37px;font-size:4.64px;color:#5c5c5c;">ICU</div>
<div class="t" style="left:622.5px;top:290.37px;font-size:4.64px;color:#5c5c5c;">MG</div>
<div class="t" style="left:657.1px;top:290.37px;font-size:4.64px;color:#5c5c5c;">Example Facility</div>
<div class="abs" style="left:5.2px;top:296.94px;width:725px;height:11.540px;background:#fff;border-top:0.5px solid #ececec"></div>
<div class="cb" style="left:10.4px;top:299.54px"></div>
<div class="t" style="left:44px;top:301.91px;font-size:4.64px;color:#5c5c5c;">5039</div>
<div class="t" style="left:80.5px;top:301.91px;font-size:4.64px;color:#5c5c5c;">Last Name, First Name</div>
<div class="t" style="left:137.2px;top:301.91px;font-size:4.64px;color:#5c5c5c;">1326</div>
<div class="t" style="left:167.9px;top:301.91px;font-size:4.64px;color:#5c5c5c;">NR_QATESTDEV</div>
<div class="t" style="left:213px;top:301.91px;font-size:4.64px;color:#5c5c5c;">1326</div>
<div class="t" style="left:246px;top:301.91px;font-size:4.64px;color:#5c5c5c;">M XR ABDOMEN AP VIEW</div>
<div class="t" style="left:311px;top:301.91px;font-size:4.64px;color:#5c5c5c;">03/22/2021</div>
<div class="t" style="left:405px;top:301.91px;font-size:4.64px;color:#5c5c5c;">Report Created</div>
<svg class="abs" style="left:526.5px;top:298.64px" width="12" height="9" viewBox="0 0 24 18"><path d="M9 2.5 Q15 -0.5 21.5 2.5 Q24 9 21.5 15.5 Q15 18 9 15.5 Z" fill="#9fd6f1" stroke="#6cc0e8" stroke-width="1.2"/><path d="M1.5 6 H10 M3.5 9.5 H10 M5.5 13 H10" stroke="#7fc8ec" stroke-width="2.2" stroke-linecap="round"/><circle cx="19.5" cy="5" r="1.6" fill="#3a9ed8"/><path d="M14 8 V14 M17 7 V14" stroke="#d6eefa" stroke-width="1"/></svg>
<div class="t" style="left:547.7px;top:301.91px;font-size:4.64px;color:#5c5c5c;">Resident</div>
<div class="t" style="left:588.5px;top:301.91px;font-size:4.64px;color:#5c5c5c;">ICU</div>
<div class="t" style="left:622.5px;top:301.91px;font-size:4.64px;color:#5c5c5c;">MG</div>
<div class="t" style="left:657.1px;top:301.91px;font-size:4.64px;color:#5c5c5c;">Example Facility</div>
<div class="abs" style="left:5.2px;top:308.48px;width:725px;height:11.540px;background:#f4f4f4;border-top:0.5px solid #ececec"></div>
<div class="cb" style="left:10.4px;top:311.08px"></div>
<div class="t" style="left:44px;top:313.45px;font-size:4.64px;color:#5c5c5c;">5038</div>
<div class="t" style="left:80.5px;top:313.45px;font-size:4.64px;color:#5c5c5c;">Last Name, First Name</div>
<div class="t" style="left:137.2px;top:313.45px;font-size:4.64px;color:#5c5c5c;">1326</div>
<div class="t" style="left:167.9px;top:313.45px;font-size:4.64px;color:#5c5c5c;">ANON-G6</div>
<div class="t" style="left:213px;top:313.45px;font-size:4.64px;color:#5c5c5c;">1326</div>
<div class="t" style="left:246px;top:313.45px;font-size:4.64px;color:#5c5c5c;">M XR ABDOMEN AP VIEW</div>
<div class="t" style="left:311px;top:313.45px;font-size:4.64px;color:#5c5c5c;">04/13/2021</div>
<div class="t" style="left:405px;top:313.45px;font-size:4.64px;color:#5c5c5c;">Report Created</div>
<svg class="abs" style="left:526.5px;top:310.18px" width="12" height="9" viewBox="0 0 24 18"><path d="M9 2.5 Q15 -0.5 21.5 2.5 Q24 9 21.5 15.5 Q15 18 9 15.5 Z" fill="#9fd6f1" stroke="#6cc0e8" stroke-width="1.2"/><path d="M1.5 6 H10 M3.5 9.5 H10 M5.5 13 H10" stroke="#7fc8ec" stroke-width="2.2" stroke-linecap="round"/><circle cx="19.5" cy="5" r="1.6" fill="#3a9ed8"/><path d="M14 8 V14 M17 7 V14" stroke="#d6eefa" stroke-width="1"/></svg>
<div class="t" style="left:547.7px;top:313.45px;font-size:4.64px;color:#5c5c5c;">Resident</div>
<div class="t" style="left:588.5px;top:313.45px;font-size:4.64px;color:#5c5c5c;">ICU</div>
<div class="t" style="left:622.5px;top:313.45px;font-size:4.64px;color:#5c5c5c;">MG</div>
<div class="t" style="left:657.1px;top:313.45px;font-size:4.64px;color:#5c5c5c;">Example Facility</div>
<div class="abs" style="left:5.2px;top:320.02px;width:725px;height:11.540px;background:#ffff00;border-top:0.5px solid #ececec"></div>
<div class="cb" style="left:10.4px;top:322.62px"></div>
<div class="abs" style="left:10.4px;top:322.62px;width:6.3px;height:6.3px"><svg width="5.2" height="4.2" viewBox="0 40 512 420" style="position:absolute;left:0.5px;top:1.2px" preserveAspectRatio="none"><path fill="#1e1e1e" d="M173.898 439.404l-166.4-166.4c-9.997-9.997-9.997-26.206 0-36.204l36.203-36.204c9.997-9.998 26.207-9.998 36.204 0L192 312.69 432.095 72.596c9.997-9.997 26.207-9.997 36.204 0l36.203 36.204c9.997 9.997 9.997 26.206 0 36.204l-294.4 294.401c-9.998 9.997-26.207 9.997-36.204-.001z"/></svg></div>
<div class="t" style="left:44px;top:324.99px;font-size:4.64px;color:#5c5c5c;">5037</div>
<div class="t" style="left:80.5px;top:324.99px;font-size:4.64px;color:#5c5c5c;">Last Name, First Name</div>
<div class="t" style="left:137.2px;top:324.99px;font-size:4.64px;color:#5c5c5c;">1326</div>
<div class="t" style="left:167.9px;top:324.99px;font-size:4.64px;color:#5c5c5c;">NR_QATESTDEV</div>
<div class="t" style="left:213px;top:324.99px;font-size:4.64px;color:#5c5c5c;">1326</div>
<div class="t" style="left:246px;top:324.99px;font-size:4.64px;color:#5c5c5c;">ER-XR T-SPINE 3 VIEWS</div>
<div class="t" style="left:311px;top:324.99px;font-size:4.64px;color:#5c5c5c;">03/22/2021</div>
<div class="t" style="left:405px;top:324.99px;font-size:4.64px;color:#5c5c5c;">Report Created</div>
<svg class="abs" style="left:526.5px;top:321.72px" width="12" height="9" viewBox="0 0 24 18"><path d="M9 2.5 Q15 -0.5 21.5 2.5 Q24 9 21.5 15.5 Q15 18 9 15.5 Z" fill="#9fd6f1" stroke="#6cc0e8" stroke-width="1.2"/><path d="M1.5 6 H10 M3.5 9.5 H10 M5.5 13 H10" stroke="#7fc8ec" stroke-width="2.2" stroke-linecap="round"/><circle cx="19.5" cy="5" r="1.6" fill="#3a9ed8"/><path d="M14 8 V14 M17 7 V14" stroke="#d6eefa" stroke-width="1"/></svg>
<div class="t" style="left:547.7px;top:324.99px;font-size:4.64px;color:#5c5c5c;">Resident</div>
<div class="t" style="left:588.5px;top:324.99px;font-size:4.64px;color:#5c5c5c;">ICU</div>
<div class="t" style="left:622.5px;top:324.99px;font-size:4.64px;color:#5c5c5c;">MG</div>
<div class="t" style="left:657.1px;top:324.99px;font-size:4.64px;color:#5c5c5c;">Example Facility</div>
<div class="abs" style="left:5.2px;top:331.56px;width:725px;height:11.540px;background:#ffffa3;border-top:0.5px solid #ececec"></div>
<div class="cb" style="left:10.4px;top:334.16px"></div>
<div class="abs" style="left:10.4px;top:334.16px;width:6.3px;height:6.3px"><svg width="5.2" height="4.2" viewBox="0 40 512 420" style="position:absolute;left:0.5px;top:1.2px" preserveAspectRatio="none"><path fill="#1e1e1e" d="M173.898 439.404l-166.4-166.4c-9.997-9.997-9.997-26.206 0-36.204l36.203-36.204c9.997-9.998 26.207-9.998 36.204 0L192 312.69 432.095 72.596c9.997-9.997 26.207-9.997 36.204 0l36.203 36.204c9.997 9.997 9.997 26.206 0 36.204l-294.4 294.401c-9.998 9.997-26.207 9.997-36.204-.001z"/></svg></div>
<div class="t" style="left:44px;top:336.53px;font-size:4.64px;color:#5c5c5c;">5036</div>
<div class="t" style="left:80.5px;top:336.53px;font-size:4.64px;color:#5c5c5c;">Last, First</div>
<div class="t" style="left:137.2px;top:336.53px;font-size:4.64px;color:#5c5c5c;">1326</div>
<div class="t" style="left:167.9px;top:336.53px;font-size:4.64px;color:#5c5c5c;">NR_QATESTDEV</div>
<div class="t" style="left:213px;top:336.53px;font-size:4.64px;color:#5c5c5c;">1326</div>
<div class="t" style="left:405px;top:336.53px;font-size:4.64px;color:#5c5c5c;">Report Created</div>
<svg class="abs" style="left:526.5px;top:333.26px" width="12" height="9" viewBox="0 0 24 18"><path d="M9 2.5 Q15 -0.5 21.5 2.5 Q24 9 21.5 15.5 Q15 18 9 15.5 Z" fill="#9fd6f1" stroke="#6cc0e8" stroke-width="1.2"/><path d="M1.5 6 H10 M3.5 9.5 H10 M5.5 13 H10" stroke="#7fc8ec" stroke-width="2.2" stroke-linecap="round"/><circle cx="19.5" cy="5" r="1.6" fill="#3a9ed8"/><path d="M14 8 V14 M17 7 V14" stroke="#d6eefa" stroke-width="1"/></svg>
<div class="t" style="left:547.7px;top:336.53px;font-size:4.64px;color:#5c5c5c;">Resident</div>
<div class="t" style="left:588.5px;top:336.53px;font-size:4.64px;color:#5c5c5c;">ICU</div>
<div class="t" style="left:622.5px;top:336.53px;font-size:4.64px;color:#5c5c5c;">MG</div>
<div class="t" style="left:657.1px;top:336.53px;font-size:4.64px;color:#5c5c5c;">Example Facility</div>
<div class="abs" style="left:5.2px;top:343.10px;width:725px;height:11.540px;background:#fff;border-top:0.5px solid #ececec"></div>
<div class="cb" style="left:10.4px;top:345.70px"></div>
<div class="t" style="left:44px;top:348.07px;font-size:4.64px;color:#5c5c5c;">5035</div>
<div class="t" style="left:80.5px;top:348.07px;font-size:4.64px;color:#5c5c5c;">Last Name, First Name</div>
<div class="t" style="left:137.2px;top:348.07px;font-size:4.64px;color:#5c5c5c;">1326</div>
<div class="t" style="left:167.9px;top:348.07px;font-size:4.64px;color:#5c5c5c;">ANON-G6</div>
<div class="t" style="left:213px;top:348.07px;font-size:4.64px;color:#5c5c5c;">1326</div>
<div class="t" style="left:246px;top:348.07px;font-size:4.64px;color:#5c5c5c;">ER-XR T-SPINE 3 VIEWS</div>
<div class="t" style="left:311px;top:348.07px;font-size:4.64px;color:#5c5c5c;">04/13/2021</div>
<div class="t" style="left:353.2px;top:348.07px;font-size:4.64px;color:#5c5c5c;">04/13/2021&nbsp;&nbsp;11:00</div>
<div class="t" style="left:405px;top:348.07px;font-size:4.64px;color:#5c5c5c;">Report Created</div>
<svg class="abs" style="left:526.5px;top:344.80px" width="12" height="9" viewBox="0 0 24 18"><path d="M9 2.5 Q15 -0.5 21.5 2.5 Q24 9 21.5 15.5 Q15 18 9 15.5 Z" fill="#9fd6f1" stroke="#6cc0e8" stroke-width="1.2"/><path d="M1.5 6 H10 M3.5 9.5 H10 M5.5 13 H10" stroke="#7fc8ec" stroke-width="2.2" stroke-linecap="round"/><circle cx="19.5" cy="5" r="1.6" fill="#3a9ed8"/><path d="M14 8 V14 M17 7 V14" stroke="#d6eefa" stroke-width="1"/></svg>
<div class="t" style="left:547.7px;top:348.07px;font-size:4.64px;color:#5c5c5c;">Resident</div>
<div class="t" style="left:588.5px;top:348.07px;font-size:4.64px;color:#5c5c5c;">NICU</div>
<div class="t" style="left:622.5px;top:348.07px;font-size:4.64px;color:#5c5c5c;">CT</div>
<div class="t" style="left:657.1px;top:348.07px;font-size:4.64px;color:#5c5c5c;">Example Facility</div>
<div class="abs" style="left:5.2px;top:354.64px;width:725px;height:11.540px;background:#f4f4f4;border-top:0.5px solid #ececec"></div>
<div class="cb" style="left:10.4px;top:357.24px"></div>
<div class="t" style="left:44px;top:359.61px;font-size:4.64px;color:#5c5c5c;">5034</div>
<div class="t" style="left:80.5px;top:359.61px;font-size:4.64px;color:#5c5c5c;">Last, First</div>
<div class="t" style="left:137.2px;top:359.61px;font-size:4.64px;color:#5c5c5c;">1326</div>
<div class="t" style="left:167.9px;top:359.61px;font-size:4.64px;color:#5c5c5c;">NR_QATESTDEV</div>
<div class="t" style="left:213px;top:359.61px;font-size:4.64px;color:#5c5c5c;">1326</div>
<div class="t" style="left:405px;top:359.61px;font-size:4.64px;color:#5c5c5c;">Report Created</div>
<svg class="abs" style="left:526.5px;top:356.34px" width="12" height="9" viewBox="0 0 24 18"><path d="M9 2.5 Q15 -0.5 21.5 2.5 Q24 9 21.5 15.5 Q15 18 9 15.5 Z" fill="#9fd6f1" stroke="#6cc0e8" stroke-width="1.2"/><path d="M1.5 6 H10 M3.5 9.5 H10 M5.5 13 H10" stroke="#7fc8ec" stroke-width="2.2" stroke-linecap="round"/><circle cx="19.5" cy="5" r="1.6" fill="#3a9ed8"/><path d="M14 8 V14 M17 7 V14" stroke="#d6eefa" stroke-width="1"/></svg>
<div class="t" style="left:547.7px;top:359.61px;font-size:4.64px;color:#5c5c5c;">Resident</div>
<div class="t" style="left:588.5px;top:359.61px;font-size:4.64px;color:#5c5c5c;">ICU</div>
<div class="t" style="left:622.5px;top:359.61px;font-size:4.64px;color:#5c5c5c;">MG</div>
<div class="t" style="left:657.1px;top:359.61px;font-size:4.64px;color:#5c5c5c;">Example Facility</div>
<div class="abs" style="left:5.2px;top:366.18px;width:725px;height:11.540px;background:#fff;border-top:0.5px solid #ececec"></div>
<div class="cb" style="left:10.4px;top:368.78px"></div>
<div class="t" style="left:44px;top:371.15px;font-size:4.64px;color:#5c5c5c;">5033</div>
<div class="t" style="left:80.5px;top:371.15px;font-size:4.64px;color:#5c5c5c;">Last, First</div>
<div class="t" style="left:137.2px;top:371.15px;font-size:4.64px;color:#5c5c5c;">1326</div>
<div class="t" style="left:167.9px;top:371.15px;font-size:4.64px;color:#5c5c5c;">NR_QATESTDEV</div>
<div class="t" style="left:213px;top:371.15px;font-size:4.64px;color:#5c5c5c;">1326</div>
<div class="t" style="left:246px;top:371.15px;font-size:4.64px;color:#5c5c5c;">ER-XR T-SPINE 3 VIEWS</div>
<div class="t" style="left:311px;top:371.15px;font-size:4.64px;color:#5c5c5c;">03/22/2021</div>
<div class="t" style="left:353.2px;top:371.15px;font-size:4.64px;color:#5c5c5c;">03/22/2021&nbsp;&nbsp;&nbsp;8:30</div>
<div class="t" style="left:405px;top:371.15px;font-size:4.64px;color:#5c5c5c;">Report Created</div>
<svg class="abs" style="left:526.5px;top:367.88px" width="12" height="9" viewBox="0 0 24 18"><path d="M9 2.5 Q15 -0.5 21.5 2.5 Q24 9 21.5 15.5 Q15 18 9 15.5 Z" fill="#9fd6f1" stroke="#6cc0e8" stroke-width="1.2"/><path d="M1.5 6 H10 M3.5 9.5 H10 M5.5 13 H10" stroke="#7fc8ec" stroke-width="2.2" stroke-linecap="round"/><circle cx="19.5" cy="5" r="1.6" fill="#3a9ed8"/><path d="M14 8 V14 M17 7 V14" stroke="#d6eefa" stroke-width="1"/></svg>
<div class="t" style="left:547.7px;top:371.15px;font-size:4.64px;color:#5c5c5c;">Resident</div>
<div class="t" style="left:588.5px;top:371.15px;font-size:4.64px;color:#5c5c5c;">NICU</div>
<div class="t" style="left:622.5px;top:371.15px;font-size:4.64px;color:#5c5c5c;">CT</div>
<div class="t" style="left:657.1px;top:371.15px;font-size:4.64px;color:#5c5c5c;">Example Facility</div>
<div class="abs" style="left:5.2px;top:377.72px;width:725px;height:11.540px;background:#f4f4f4;border-top:0.5px solid #ececec"></div>
<div class="cb" style="left:10.4px;top:380.32px"></div>
<div class="t" style="left:44px;top:382.69px;font-size:4.64px;color:#5c5c5c;">5032</div>
<div class="t" style="left:80.5px;top:382.69px;font-size:4.64px;color:#5c5c5c;">Last Name, First Name</div>
<div class="t" style="left:137.2px;top:382.69px;font-size:4.64px;color:#5c5c5c;">1326</div>
<div class="t" style="left:167.9px;top:382.69px;font-size:4.64px;color:#5c5c5c;">ANON-G6</div>
<div class="t" style="left:213px;top:382.69px;font-size:4.64px;color:#5c5c5c;">1326</div>
<div class="t" style="left:246px;top:382.69px;font-size:4.64px;color:#5c5c5c;">ER-XR T-SPINE 3 VIEWS</div>
<div class="t" style="left:311px;top:382.69px;font-size:4.64px;color:#5c5c5c;">04/13/2021</div>
<div class="t" style="left:353.2px;top:382.69px;font-size:4.64px;color:#5c5c5c;">04/13/2021&nbsp;&nbsp;11:00</div>
<div class="t" style="left:405px;top:382.69px;font-size:4.64px;color:#5c5c5c;">Report Created</div>
<svg class="abs" style="left:526.5px;top:379.42px" width="12" height="9" viewBox="0 0 24 18"><path d="M9 2.5 Q15 -0.5 21.5 2.5 Q24 9 21.5 15.5 Q15 18 9 15.5 Z" fill="#9fd6f1" stroke="#6cc0e8" stroke-width="1.2"/><path d="M1.5 6 H10 M3.5 9.5 H10 M5.5 13 H10" stroke="#7fc8ec" stroke-width="2.2" stroke-linecap="round"/><circle cx="19.5" cy="5" r="1.6" fill="#3a9ed8"/><path d="M14 8 V14 M17 7 V14" stroke="#d6eefa" stroke-width="1"/></svg>
<div class="abs" style="left:532.8px;top:378.02px;width:5.6px;height:5.6px;border-radius:50%;background:#e0403a;border:0.7px solid #fff"></div><div class="abs" style="left:535.25px;top:379.22px;width:0.8px;height:2.2px;background:#fff"></div>
<div class="t" style="left:547.7px;top:382.69px;font-size:4.64px;color:#5c5c5c;">Resident</div>
<div class="t" style="left:588.5px;top:382.69px;font-size:4.64px;color:#5c5c5c;">ICU</div>
<div class="t" style="left:622.5px;top:382.69px;font-size:4.64px;color:#5c5c5c;">CT</div>
<div class="t" style="left:657.1px;top:382.69px;font-size:4.64px;color:#5c5c5c;">Example Facility</div>
<div class="abs" style="left:5.2px;top:389.26px;width:725px;height:11.540px;background:#fff;border-top:0.5px solid #ececec"></div>
<div class="cb" style="left:10.4px;top:391.86px"></div>
<div class="t" style="left:44px;top:394.23px;font-size:4.64px;color:#5c5c5c;">5031</div>
<div class="t" style="left:80.5px;top:394.23px;font-size:4.64px;color:#5c5c5c;">Last Name, First Name</div>
<div class="t" style="left:137.2px;top:394.23px;font-size:4.64px;color:#5c5c5c;">1326</div>
<div class="t" style="left:167.9px;top:394.23px;font-size:4.64px;color:#5c5c5c;">ANON-G6</div>
<div class="t" style="left:213px;top:394.23px;font-size:4.64px;color:#5c5c5c;">1326</div>
<div class="t" style="left:246px;top:394.23px;font-size:4.64px;color:#5c5c5c;">M XR ABDOMEN AP VIEW</div>
<div class="t" style="left:311px;top:394.23px;font-size:4.64px;color:#5c5c5c;">03/22/2021</div>
<div class="t" style="left:353.2px;top:394.23px;font-size:4.64px;color:#5c5c5c;">03/22/2021&nbsp;&nbsp;&nbsp;8:30</div>
<div class="t" style="left:405px;top:394.23px;font-size:4.64px;color:#5c5c5c;">Report Created</div>
<svg class="abs" style="left:526.5px;top:390.96px" width="12" height="9" viewBox="0 0 24 18"><path d="M9 2.5 Q15 -0.5 21.5 2.5 Q24 9 21.5 15.5 Q15 18 9 15.5 Z" fill="#9fd6f1" stroke="#6cc0e8" stroke-width="1.2"/><path d="M1.5 6 H10 M3.5 9.5 H10 M5.5 13 H10" stroke="#7fc8ec" stroke-width="2.2" stroke-linecap="round"/><circle cx="19.5" cy="5" r="1.6" fill="#3a9ed8"/><path d="M14 8 V14 M17 7 V14" stroke="#d6eefa" stroke-width="1"/></svg>
<div class="t" style="left:547.7px;top:394.23px;font-size:4.64px;color:#5c5c5c;">Resident</div>
<div class="t" style="left:588.5px;top:394.23px;font-size:4.64px;color:#5c5c5c;">ICU</div>
<div class="t" style="left:622.5px;top:394.23px;font-size:4.64px;color:#5c5c5c;">MG</div>
<div class="t" style="left:657.1px;top:394.23px;font-size:4.64px;color:#5c5c5c;">Example Facility</div>
<div class="abs" style="left:5.2px;top:400.80px;width:725px;height:11.540px;background:#f4f4f4;border-top:0.5px solid #ececec"></div>
<div class="cb" style="left:10.4px;top:403.40px"></div>
<svg class="abs" style="left:714.5px;top:194.48px" width="13" height="8" viewBox="0 0 26 16"><path d="M7 1 L14 15 H0 Z" fill="#e04a3a"/><rect x="6.3" y="5" width="1.4" height="5" fill="#fff"/><rect x="6.3" y="11.5" width="1.4" height="1.5" fill="#fff"/><path d="M15 9 L20 6 L25 11 L20 15 Z" fill="#9fd4ee" stroke="#3aa6dc" stroke-width="1"/></svg>
<div class="abs" style="left:731.5px;top:171.3px;width:4.4px;height:111.7px;border-radius:2px;background:#a9a9a9"></div>
<svg class="abs" style="left:732.2px;top:158.3px" width="3" height="2"><path d="M0.4 1.7 L1.5 0.5 L2.6 1.7" stroke="#888" stroke-width="0.8" fill="none"/></svg>
<svg class="abs" style="left:732.2px;top:411px" width="3" height="2"><path d="M0.2 0.2 L2.8 0.2 L1.5 1.8 Z" fill="#888"/></svg>
<div class="abs" style="left:335.4px;top:92.8px;width:343.8px;height:239.4px;background:#fff;box-shadow:0 1px 4px rgba(0,0,0,0.22);border-radius:2px 2px 0 0"></div>
<div class="abs" style="left:335.4px;top:92.8px;width:343.8px;height:11px;background:#3d3d3d"></div>
<div class="t" style="left:342.3px;top:97.23px;font-size:5.4px;color:#fff;font-weight:bold;">Assigned To</div>
<svg class="abs" style="left:669.8px;top:96px" width="5" height="5" viewBox="0 0 10 10"><path d="M1.5 1.5 L8.5 8.5 M8.5 1.5 L1.5 8.5" stroke="#fff" stroke-width="2.4"/></svg>
<div class="t" style="left:343.2px;top:117.37px;font-size:4.64px;color:#333;">The following studies will be assigned (deselect to remove a study):</div>
<div class="abs" style="left:339.5px;top:125.2px;width:335.6px;height:105.1px;border:0.6px solid #ebebeb;border-radius:2px;background:#fff"></div>
<div class="abs" style="left:340.4px;top:136.0px;width:332.8px;height:92.0px;border:0.6px solid #e6e6e6;border-radius:1.5px;background:#fff"></div>
<div class="t" style="left:358.7px;top:128.77px;font-size:4.64px;color:#333;font-weight:bold;">Study Date</div>
<div class="t" style="left:421.5px;top:128.77px;font-size:4.64px;color:#333;font-weight:bold;">Patient Name</div>
<div class="t" style="left:489.4px;top:128.77px;font-size:4.64px;color:#333;font-weight:bold;">Description</div>
<div class="t" style="left:564.5px;top:128.77px;font-size:4.64px;color:#333;font-weight:bold;">Modality</div>
<div class="abs" style="left:340.7px;top:136.40px;width:326.5px;height:11.62px;background:#f3f3f3;border-bottom:1.2px solid #d9d9d9"></div>
<div class="cb" style="left:342.6px;top:139.00px;border-color:#e6e6e6"></div><div class="abs" style="left:342.6px;top:139.00px;width:6.3px;height:6.3px"><svg width="5.2" height="4.2" viewBox="0 40 512 420" style="position:absolute;left:0.5px;top:1.2px" preserveAspectRatio="none"><path fill="#1e1e1e" d="M173.898 439.404l-166.4-166.4c-9.997-9.997-9.997-26.206 0-36.204l36.203-36.204c9.997-9.998 26.207-9.998 36.204 0L192 312.69 432.095 72.596c9.997-9.997 26.207-9.997 36.204 0l36.203 36.204c9.997 9.997 9.997 26.206 0 36.204l-294.4 294.401c-9.998 9.997-26.207 9.997-36.204-.001z"/></svg></div>
<div class="t" style="left:359.5px;top:141.57px;font-size:4.64px;color:#555;">03/22/2021</div>
<div class="t" style="left:421.5px;top:141.57px;font-size:4.64px;color:#555;">Last Name, First Name</div>
<div class="t" style="left:489.4px;top:141.57px;font-size:4.64px;color:#555;">ER-XR T-SPINE 3 VIEWS</div>
<div class="t" style="left:564.5px;top:141.57px;font-size:4.64px;color:#555;">CT</div>
<div class="abs" style="left:340.7px;top:148.02px;width:326.5px;height:11.62px;background:#fff;border-bottom:1.2px solid #d9d9d9"></div>
<div class="cb" style="left:342.6px;top:150.62px;border-color:#e6e6e6"></div><div class="abs" style="left:342.6px;top:150.62px;width:6.3px;height:6.3px"><svg width="5.2" height="4.2" viewBox="0 40 512 420" style="position:absolute;left:0.5px;top:1.2px" preserveAspectRatio="none"><path fill="#1e1e1e" d="M173.898 439.404l-166.4-166.4c-9.997-9.997-9.997-26.206 0-36.204l36.203-36.204c9.997-9.998 26.207-9.998 36.204 0L192 312.69 432.095 72.596c9.997-9.997 26.207-9.997 36.204 0l36.203 36.204c9.997 9.997 9.997 26.206 0 36.204l-294.4 294.401c-9.998 9.997-26.207 9.997-36.204-.001z"/></svg></div>
<div class="t" style="left:359.5px;top:153.19px;font-size:4.64px;color:#555;">01/20/2021</div>
<div class="t" style="left:421.5px;top:153.19px;font-size:4.64px;color:#555;">Last Name, First Name</div>
<div class="t" style="left:489.4px;top:153.19px;font-size:4.64px;color:#555;">M XR ABDOMEN AP VIEW</div>
<div class="t" style="left:564.5px;top:153.19px;font-size:4.64px;color:#555;">MR</div>
<div class="abs" style="left:340.7px;top:159.64px;width:326.5px;height:11.62px;background:#f3f3f3;border-bottom:1.2px solid #d9d9d9"></div>
<div class="cb" style="left:342.6px;top:162.24px;border-color:#e6e6e6"></div><div class="abs" style="left:342.6px;top:162.24px;width:6.3px;height:6.3px"><svg width="5.2" height="4.2" viewBox="0 40 512 420" style="position:absolute;left:0.5px;top:1.2px" preserveAspectRatio="none"><path fill="#1e1e1e" d="M173.898 439.404l-166.4-166.4c-9.997-9.997-9.997-26.206 0-36.204l36.203-36.204c9.997-9.998 26.207-9.998 36.204 0L192 312.69 432.095 72.596c9.997-9.997 26.207-9.997 36.204 0l36.203 36.204c9.997 9.997 9.997 26.206 0 36.204l-294.4 294.401c-9.998 9.997-26.207 9.997-36.204-.001z"/></svg></div>
<div class="t" style="left:359.5px;top:164.81px;font-size:4.64px;color:#555;">03/22/2021</div>
<div class="t" style="left:421.5px;top:164.81px;font-size:4.64px;color:#555;">Last Name, First Name</div>
<div class="t" style="left:489.4px;top:164.81px;font-size:4.64px;color:#555;">ER-XR T-SPINE 3 VIEWS</div>
<div class="t" style="left:564.5px;top:164.81px;font-size:4.64px;color:#555;">MG</div>
<div class="abs" style="left:340.7px;top:171.26px;width:326.5px;height:11.62px;background:#fff;border-bottom:1.2px solid #d9d9d9"></div>
<div class="cb" style="left:342.6px;top:173.86px;border-color:#e6e6e6"></div><div class="abs" style="left:342.6px;top:173.86px;width:6.3px;height:6.3px"><svg width="5.2" height="4.2" viewBox="0 40 512 420" style="position:absolute;left:0.5px;top:1.2px" preserveAspectRatio="none"><path fill="#1e1e1e" d="M173.898 439.404l-166.4-166.4c-9.997-9.997-9.997-26.206 0-36.204l36.203-36.204c9.997-9.998 26.207-9.998 36.204 0L192 312.69 432.095 72.596c9.997-9.997 26.207-9.997 36.204 0l36.203 36.204c9.997 9.997 9.997 26.206 0 36.204l-294.4 294.401c-9.998 9.997-26.207 9.997-36.204-.001z"/></svg></div>
<div class="t" style="left:359.5px;top:176.43px;font-size:4.64px;color:#555;">04/05/2020</div>
<div class="t" style="left:421.5px;top:176.43px;font-size:4.64px;color:#555;">Last Name, First Name</div>
<div class="t" style="left:489.4px;top:176.43px;font-size:4.64px;color:#555;">ER-XR T-SPINE 3 VIEWS</div>
<div class="t" style="left:564.5px;top:176.43px;font-size:4.64px;color:#555;">MR</div>
<div class="abs" style="left:340.7px;top:182.88px;width:326.5px;height:11.62px;background:#f3f3f3;border-bottom:1.2px solid #d9d9d9"></div>
<div class="cb" style="left:342.6px;top:185.48px;border-color:#e6e6e6"></div><div class="abs" style="left:342.6px;top:185.48px;width:6.3px;height:6.3px"><svg width="5.2" height="4.2" viewBox="0 40 512 420" style="position:absolute;left:0.5px;top:1.2px" preserveAspectRatio="none"><path fill="#1e1e1e" d="M173.898 439.404l-166.4-166.4c-9.997-9.997-9.997-26.206 0-36.204l36.203-36.204c9.997-9.998 26.207-9.998 36.204 0L192 312.69 432.095 72.596c9.997-9.997 26.207-9.997 36.204 0l36.203 36.204c9.997 9.997 9.997 26.206 0 36.204l-294.4 294.401c-9.998 9.997-26.207 9.997-36.204-.001z"/></svg></div>
<div class="t" style="left:359.5px;top:188.05px;font-size:4.64px;color:#555;">03/22/2021</div>
<div class="t" style="left:421.5px;top:188.05px;font-size:4.64px;color:#555;">Last Name, First Name</div>
<div class="t" style="left:489.4px;top:188.05px;font-size:4.64px;color:#555;">M XR ABDOMEN AP VIEW</div>
<div class="t" style="left:564.5px;top:188.05px;font-size:4.64px;color:#555;">MR</div>
<div class="abs" style="left:340.7px;top:194.50px;width:326.5px;height:11.62px;background:#fff;border-bottom:1.2px solid #d9d9d9"></div>
<div class="cb" style="left:342.6px;top:197.10px;border-color:#e6e6e6"></div><div class="abs" style="left:342.6px;top:197.10px;width:6.3px;height:6.3px"><svg width="5.2" height="4.2" viewBox="0 40 512 420" style="position:absolute;left:0.5px;top:1.2px" preserveAspectRatio="none"><path fill="#1e1e1e" d="M173.898 439.404l-166.4-166.4c-9.997-9.997-9.997-26.206 0-36.204l36.203-36.204c9.997-9.998 26.207-9.998 36.204 0L192 312.69 432.095 72.596c9.997-9.997 26.207-9.997 36.204 0l36.203 36.204c9.997 9.997 9.997 26.206 0 36.204l-294.4 294.401c-9.998 9.997-26.207 9.997-36.204-.001z"/></svg></div>
<div class="t" style="left:359.5px;top:199.67px;font-size:4.64px;color:#555;">11/22/2018</div>
<div class="t" style="left:421.5px;top:199.67px;font-size:4.64px;color:#555;">Last Name, First Name</div>
<div class="t" style="left:489.4px;top:199.67px;font-size:4.64px;color:#555;">ER-XR T-SPINE 3 VIEWS</div>
<div class="t" style="left:564.5px;top:199.67px;font-size:4.64px;color:#555;">CT</div>
<div class="abs" style="left:340.7px;top:206.12px;width:326.5px;height:11.62px;background:#f3f3f3;border-bottom:1.2px solid #d9d9d9"></div>
<div class="cb" style="left:342.6px;top:208.72px;border-color:#e6e6e6"></div><div class="abs" style="left:342.6px;top:208.72px;width:6.3px;height:6.3px"><svg width="5.2" height="4.2" viewBox="0 40 512 420" style="position:absolute;left:0.5px;top:1.2px" preserveAspectRatio="none"><path fill="#1e1e1e" d="M173.898 439.404l-166.4-166.4c-9.997-9.997-9.997-26.206 0-36.204l36.203-36.204c9.997-9.998 26.207-9.998 36.204 0L192 312.69 432.095 72.596c9.997-9.997 26.207-9.997 36.204 0l36.203 36.204c9.997 9.997 9.997 26.206 0 36.204l-294.4 294.401c-9.998 9.997-26.207 9.997-36.204-.001z"/></svg></div>
<div class="t" style="left:359.5px;top:211.29px;font-size:4.64px;color:#555;">10/17/2019</div>
<div class="t" style="left:421.5px;top:211.29px;font-size:4.64px;color:#555;">Last Name, First Name</div>
<div class="t" style="left:489.4px;top:211.29px;font-size:4.64px;color:#555;">M XR ABDOMEN AP VIEW</div>
<div class="t" style="left:564.5px;top:211.29px;font-size:4.64px;color:#555;">CT</div>
<div class="abs" style="left:668.3px;top:151.8px;width:3.4px;height:56.8px;border-radius:2px;background:#a9a9a9"></div>
<svg class="abs" style="left:668.6px;top:140px" width="3" height="2"><path d="M0.4 1.6 L1.4 0.5 L2.4 1.6" stroke="#999" stroke-width="0.7" fill="none"/></svg>
<svg class="abs" style="left:668.6px;top:221.6px" width="3" height="2"><path d="M0.4 0.4 L1.4 1.5 L2.4 0.4" stroke="#999" stroke-width="0.7" fill="none"/></svg>
<div class="t" style="left:343.1px;top:243.07px;font-size:4.64px;color:#333;">Role Assigned To:</div>
<div class="t" style="left:343.1px;top:258.87px;font-size:4.64px;color:#333;">Which User to Assign to?</div>
<div class="abs" style="left:339.3px;top:266.8px;width:336px;height:46.6px;border:0.6px solid #dcdcdc;border-radius:2px;background:#fff"></div>
<div class="t" style="left:343.1px;top:272.27px;font-size:4.64px;color:#333;">(Select a Role)</div>
<div class="abs" style="left:394.5px;top:238.4px;width:57.7px;height:34px;border:0.6px solid #dcdcdc;border-radius:2px;background:#fff;box-shadow:0 1px 2.5px rgba(0,0,0,0.15)"></div>
<div class="abs" style="left:394.8px;top:249.2px;width:57.1px;height:0.7px;background:#dedede"></div>
<div class="t" style="left:402px;top:242.57px;font-size:4.64px;color:#b5b9c2;">Select an option</div>
<svg class="abs" style="left:444.60px;top:242.80px;overflow:visible" width="3.6" height="2.4" viewBox="0 0 3.6 2.4"><path d="M0.3 0.3 L1.80 2.10 L3.30 0.3" stroke="#333" stroke-width="1.1" fill="none"/></svg>
<div class="abs" style="left:395.1px;top:261px;width:56.5px;height:10.8px;background:#e3e3e3;border-radius:0 0 1.5px 1.5px"></div>
<div class="cb" style="left:396.5px;top:252.2px"></div>
<div class="cb" style="left:396.5px;top:263.7px"></div>
<div class="abs" style="left:396.5px;top:263.7px;width:6.3px;height:6.3px"><svg width="5.2" height="4.2" viewBox="0 40 512 420" style="position:absolute;left:0.5px;top:1.2px" preserveAspectRatio="none"><path fill="#1e1e1e" d="M173.898 439.404l-166.4-166.4c-9.997-9.997-9.997-26.206 0-36.204l36.203-36.204c9.997-9.998 26.207-9.998 36.204 0L192 312.69 432.095 72.596c9.997-9.997 26.207-9.997 36.204 0l36.203 36.204c9.997 9.997 9.997 26.206 0 36.204l-294.4 294.401c-9.998 9.997-26.207 9.997-36.204-.001z"/></svg></div>
<div class="t" style="left:410.8px;top:254.27px;font-size:4.64px;color:#444;">Radiologist</div>
<div class="t" style="left:410.8px;top:265.77px;font-size:4.64px;color:#444;">Resident</div>
<div class="abs" style="left:611.2px;top:317.9px;width:28.2px;height:10px;border-radius:2px;background:#1592d2"></div>
<div class="t" style="left:619.8px;top:321.57px;font-size:4.64px;color:#fff;font-weight:bold;">Apply</div>
<div class="abs" style="left:643.2px;top:317.9px;width:30.3px;height:10px;border-radius:2px;background:#fff;border:0.6px solid #ccc;box-shadow:0 0.5px 1px rgba(0,0,0,0.15)"></div>
<div class="t" style="left:650.6px;top:321.57px;font-size:4.64px;color:#333;font-weight:bold;">Cancel</div>
</div></body></html>
